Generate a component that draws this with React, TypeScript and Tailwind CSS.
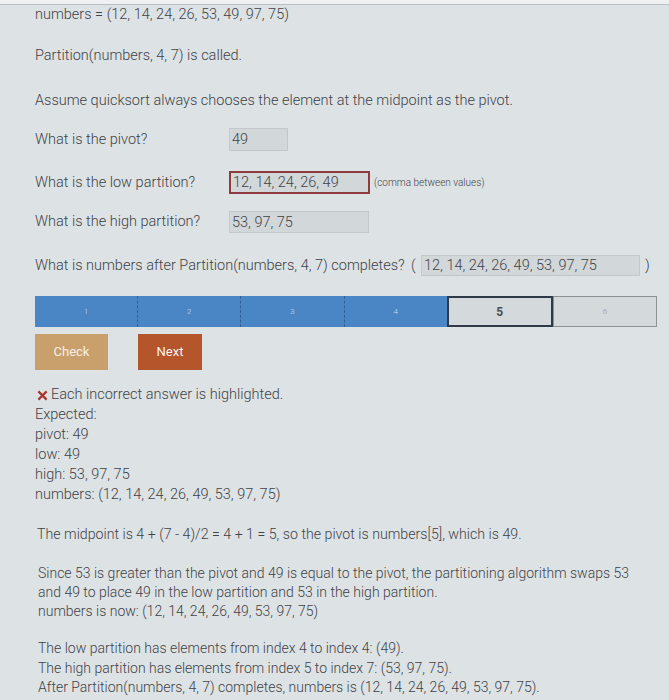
export default function App() {
  const segs = ["1", "2", "3", "4"];

  return (
    <div
      className="w-[669px] h-[700px] overflow-hidden bg-[#dde2e5] text-[#3f4347] text-[14.5px] font-light"
      style={{ fontFamily: "Roboto, 'Liberation Sans', sans-serif" }}
    >
      <div className="h-[5px] bg-[#eef0f1] border-b border-[#b9bec2]" />
      <div className="pl-[35px] pr-[12px]">
        <p className="h-[20px] leading-[20px]">numbers = (12, 14, 24, 26, 53, 49, 97, 75)</p>
        <p className="mt-[21px] h-[20px] leading-[20px]">Partition(numbers, 4, 7) is called.</p>
        <p className="mt-[25px] h-[20px] leading-[20px]">
          Assume quicksort always chooses the element at the midpoint as the pivot.
        </p>

        <div className="mt-[17px] flex items-center h-[23px]">
          <span className="w-[194px]">What is the pivot?</span>
          <div className="w-[59px] h-[23px] px-[2px] leading-[22px] bg-[#d2d7da] border border-[#c3c8cc]">
            49
          </div>
        </div>

        <div className="mt-[20px] flex items-center h-[23px]">
          <span className="w-[194px]">What is the low partition?</span>
          <div className="w-[141px] h-[23px] px-[2px] leading-[20px] bg-[#d2d7da] border-2 border-[#8e3b3d]">
            12, 14, 24, 26, 49
          </div>
          <span className="ml-[4px] text-[10px]">(comma between values)</span>
        </div>

        <div className="mt-[17px] flex items-center h-[22px]">
          <span className="w-[194px]">What is the high partition?</span>
          <div className="w-[140px] h-[22px] px-[2px] leading-[21px] bg-[#d2d7da] border border-[#c3c8cc]">
            53, 97, 75
          </div>
        </div>

        <div className="mt-[22px] flex items-center h-[21px]">
          <span className="w-[376px] whitespace-nowrap">What is numbers after Partition(numbers, 4, 7) completes?</span>
          <span className="w-[10px]">(</span>
          <div className="w-[219px] h-[21px] px-[2px] leading-[20px] bg-[#d2d7da] border border-[#c3c8cc]">
            12, 14, 24, 26, 49, 53, 97, 75
          </div>
          <span className="ml-[5px]">)</span>
        </div>

        <div className="mt-[20px] flex h-[31px] w-[622px]">
          {segs.map((s, i) => (
            <div
              key={s}
              className={`flex-1 flex items-center justify-center bg-[#4a86c6] text-[8px] text-[#c9dcf0] ${
                i < 3 ? "border-r border-dashed border-[#2f5f93]" : ""
              }`}
            >
              {s}
            </div>
          ))}
          <div className="flex-1 flex items-center justify-center bg-[#d4d9dc] border-2 border-[#2e3a47] text-[12px] font-bold text-[#4a4e52]">
            5
          </div>
          <div className="flex-1 flex items-center justify-center bg-[#d4d9dc] border border-[#8c9298] text-[8px] text-[#8c9298]">
            6
          </div>
        </div>

        <div className="mt-[7px] flex gap-[30px] h-[36px]">
          <button className="w-[73px] h-[36px] bg-[#c9a06c] text-[#f6efe6] text-[13px] font-normal">
            Check
          </button>
          <button className="w-[64px] h-[36px] bg-[#b4552b] text-[#fbf3ee] text-[13px] font-normal">
            Next
          </button>
        </div>

        <div className="mt-[15px] leading-[20px]">
          <p className="flex items-center h-[20px]">
            <svg width="11" height="11" viewBox="0 0 12 12" className="ml-[2px] mr-[3px]">
              <path d="M1.5 1.5 L10.5 10.5 M10.5 1.5 L1.5 10.5" stroke="#a8352f" strokeWidth="2.4" />
            </svg>
            Each incorrect answer is highlighted.
          </p>
          <p>Expected:</p>
          <p>pivot: 49</p>
          <p>low: 49</p>
          <p>high: 53, 97, 75</p>
          <p>numbers: (12, 14, 24, 26, 49, 53, 97, 75)</p>
        </div>

        <p className="mt-[19px] h-[20px] leading-[20px] pl-[2px] text-[14.2px]">
          The midpoint is 4 + (7 - 4)/2 = 4 + 1 = 5, so the pivot is numbers[5], which is 49.
        </p>

        <div className="mt-[20px] leading-[19px] pl-[3px] pr-[20px] text-[14px]">
          <p>
            Since 53 is greater than the pivot and 49 is equal to the pivot, the partitioning algorithm swaps 53
            and 49 to place 49 in the low partition and 53 in the high partition.
          </p>
          <p>numbers is now: (12, 14, 24, 26, 49, 53, 97, 75)</p>
        </div>

        <div className="mt-[18px] leading-[19.5px] pl-[3px] text-[14px]">
          <p>The low partition has elements from index 4 to index 4: (49).</p>
          <p>The high partition has elements from index 5 to index 7: (53, 97, 75).</p>
          <p>After Partition(numbers, 4, 7) completes, numbers is (12, 14, 24, 26, 49, 53, 97, 75).</p>
        </div>
      </div>
    </div>
  );
}
